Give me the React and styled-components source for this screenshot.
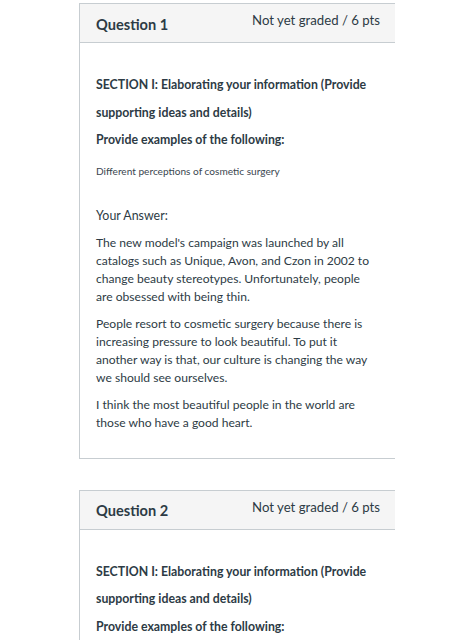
import React from 'react';
import styled, { createGlobalStyle } from 'styled-components';

const GlobalStyle = createGlobalStyle`
  body {
    margin: 0;
    background: #ffffff;
    font-family: Lato, "Open Sans", sans-serif;
    color: #2d3b45;
  }
`;

const Page = styled.div`
  padding: 3px 0 0 79px;
  display: flex;
  flex-direction: column;
  gap: 31px;
`;

const Card = styled.div`
  width: 315px;
  border: 1px solid #c7cdd1;
  border-right: none;
  background: #fff;
`;

const Header = styled.div`
  background: #f5f5f5;
  border-bottom: 1px solid #c7cdd1;
  height: 38px;
  display: flex;
  justify-content: space-between;
  padding: 0 15px 0 16px;
`;

const Title = styled.h2`
  margin: 0;
  align-self: center;
  padding-top: 2px;
  font-size: 14.6px;
  font-weight: 700;
  color: #2d3b45;
`;

const Points = styled.span`
  padding-top: 8px;
  font-size: 13.2px;
  color: #2d3b45;
`;

const Body = styled.div`
  padding: 28px 16px 26px 16px;
`;

const Prompt = styled.p`
  margin: 0;
  font-size: 12.3px;
  font-weight: 700;
  line-height: 27.5px;
`;

const Detail = styled.p`
  margin: 11px 0 0;
  font-size: 10.1px;
  color: #3a464f;
`;

const AnswerLabel = styled.div`
  margin-top: 31px;
  font-size: 12.4px;
  color: #2d3b45;
`;

const Answer = styled.div`
  margin-top: 11px;
  display: flex;
  flex-direction: column;
  gap: 9px;
`;

const Para = styled.p`
  margin: 0;
  font-size: 12.1px;
  line-height: 18px;
`;

const questions = [
  {
    n: 1,
    answer: [
      "The new model's campaign was launched by all catalogs such as Unique, Avon, and Czon in 2002 to change beauty stereotypes. Unfortunately, people are obsessed with being thin.",
      'People resort to cosmetic surgery because there is increasing pressure to look beautiful. To put it another way is that, our culture is changing the way we should see ourselves.',
      'I think the most beautiful people in the world are those who have a good heart.',
    ],
  },
  { n: 2, answer: [] },
];

export default function App() {
  return (
    <>
      <GlobalStyle />
      <Page>
        {questions.map((q) => (
          <Card key={q.n}>
            <Header>
              <Title>Question {q.n}</Title>
              <Points>Not yet graded / 6 pts</Points>
            </Header>
            <Body>
              <Prompt>
                SECTION I: Elaborating your information (Provide supporting ideas and details)
              </Prompt>
              <Prompt>Provide examples of the following:</Prompt>
              <Detail>Different perceptions of cosmetic surgery</Detail>
              <AnswerLabel>Your Answer:</AnswerLabel>
              <Answer>
                {q.answer.map((p, i) => (
                  <Para key={i}>{p}</Para>
                ))}
              </Answer>
            </Body>
          </Card>
        ))}
      </Page>
    </>
  );
}
